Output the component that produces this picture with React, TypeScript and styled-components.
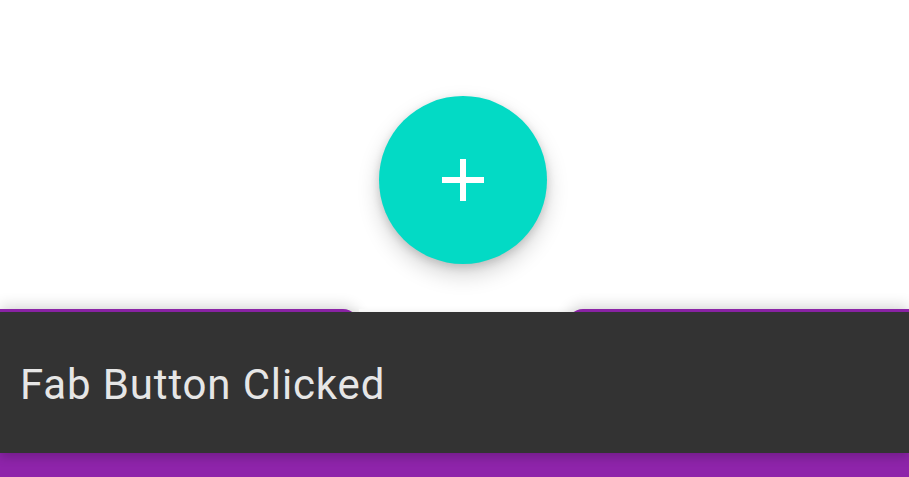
import React from "react";
import styled, { createGlobalStyle } from "styled-components";

const GlobalStyle = createGlobalStyle`
   html,
   body {
      margin: 0;
      padding: 0;
      height: 100%;
      background: #ffffff;
      font-family: Roboto, "Noto Sans", sans-serif;
      overflow: hidden;
   }
   #root {
      height: 100%;
   }
`;

const theme = {
   colors: {
      primary: "#8e24aa",
      secondary: "#03dac5",
      snackbar: "#333333",
   },
   size: {
      fab: 168,
      notch: 208,
      // fab & notch sit a few px right of the page centre
      offset: 16,
   },
};

function App() {
   return (
      <>
         <GlobalStyle />
         <StyledScreen>
            <StyledContent>
               <StyledFab aria-label="add">
                  <svg width="42" height="42" viewBox="0 0 42 42">
                     <rect x="18" y="0" width="6" height="42" fill="#ffffff" />
                     <rect x="0" y="18" width="42" height="6" fill="#ffffff" />
                  </svg>
               </StyledFab>
            </StyledContent>

            <StyledBottomBar>
               <StyledBarTop>
                  <StyledWing side="left" />
                  <StyledNotch />
                  <StyledWing side="right" />
               </StyledBarTop>
               <StyledBarBase />

               <StyledSnackbar>
                  <span>Fab Button Clicked</span>
               </StyledSnackbar>
            </StyledBottomBar>
         </StyledScreen>
      </>
   );
}

export default App;

const StyledScreen = styled.div`
   height: 100%;
   display: flex;
   flex-direction: column;
`;

const StyledContent = styled.div`
   height: 309px;
   display: flex;
   justify-content: center;
   padding-top: 96px;
   box-sizing: border-box;
   position: relative;
   z-index: 2;
`;

const StyledFab = styled.button`
   width: ${theme.size.fab}px;
   height: ${theme.size.fab}px;
   margin-left: ${theme.size.offset}px;
   border: none;
   border-radius: 50%;
   background: ${theme.colors.secondary};
   display: flex;
   align-items: center;
   justify-content: center;
   padding: 0;
   box-shadow: 0 10px 22px rgba(0, 0, 0, 0.18), 0 3px 8px rgba(0, 0, 0, 0.14);
`;

const StyledBottomBar = styled.div`
   flex: 1;
   display: flex;
   flex-direction: column;
   position: relative;
`;

const StyledBarTop = styled.div`
   height: 100px;
   display: flex;
`;

const StyledWing = styled.div<{ side: "left" | "right" }>`
   flex: 1 0 ${(p) => (p.side === "left" ? theme.size.offset : 0)}px;
   background: ${theme.colors.primary};
   border-top-${(p) => (p.side === "left" ? "right" : "left")}-radius: 16px;
   box-shadow: 0 -4px 14px rgba(0, 0, 0, 0.14);
`;

const StyledNotch = styled.div`
   width: ${theme.size.notch}px;
   background: #ffffff;
`;

const StyledBarBase = styled.div`
   flex: 1;
   background: ${theme.colors.primary};
`;

const StyledSnackbar = styled.div`
   position: absolute;
   left: 0;
   right: 0;
   top: 3px;
   height: 141px;
   background: ${theme.colors.snackbar};
   display: flex;
   align-items: center;
   padding: 0 0 0 20px;
   box-shadow: 0 4px 10px rgba(0, 0, 0, 0.2);
   z-index: 3;

   span {
      color: #e6e6e6;
      font-family: Roboto, sans-serif;
      font-size: 42px;
      letter-spacing: 0.85px;
      line-height: 1;
      padding-top: 4px;
   }
`;
